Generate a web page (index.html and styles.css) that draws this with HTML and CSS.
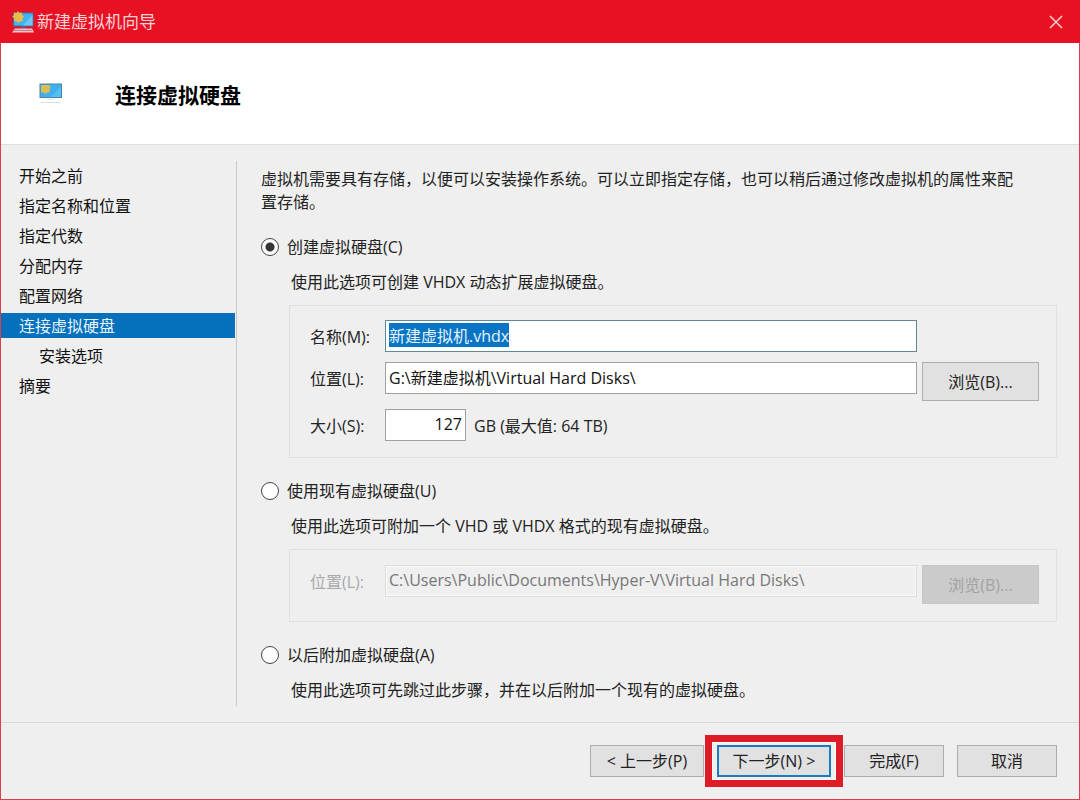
FILE: index.html
```
<!DOCTYPE html>
<html lang="zh-CN">
<head>
    <meta charset="UTF-8">
    <meta name="viewport" content="width=device-width, initial-scale=1.0">
    <title>新建虚拟机向导</title>
    <link rel="stylesheet" href="styles.css">
</head>
<body>
    <form class="window">
        <header class="titlebar">
            <svg class="titlebar-icon" viewBox="0 0 22 22" aria-hidden="true">
                <rect x="1" y="1.5" width="20.5" height="14" fill="#3f6f9c"/>
                <rect x="2" y="2.5" width="18.5" height="12" fill="#45b4ee"/>
                <path d="M11 14.5 20.5 4v10.5z" fill="#6cc8f5"/>
                <path d="M6 0l1.5 2 2.5-.5V4l2 1.5-1.5 2 .5 2.5-2.5.3L6.500 12l-2-1.700L2 10l.5-2.500L0 5.500 2 4V1.500l2.500.5z" fill="#e8bd4a"/>
                <path d="M9 15.5h4v2H9z" fill="#4b6a92"/>
                <path d="M3 17.5h17l2 4H0z" fill="#f3c3cc"/>
                <path d="M2 19.5h18" stroke="#c57b92"/>
            </svg>
            <span class="titlebar-text">新建虚拟机向导</span>
            <button type="button" class="close" aria-label="关闭">
                <svg viewBox="0 0 14 14" aria-hidden="true">
                    <path d="M1 1l12 12M13 1L1 13" stroke="#fbd0d4" stroke-width="1.5" fill="none"/>
                </svg>
            </button>
        </header>

        <div class="banner">
            <svg class="banner-icon" viewBox="0 0 24 22" aria-hidden="true">
                <rect x=".5" y=".5" width="22.5" height="14.5" fill="#4583b3"/>
                <rect x="1.5" y="1.5" width="20.5" height="12.5" fill="#3fb0ee"/>
                <path d="M12 14 22 3v11z" fill="#58bdf2"/>
                <path d="M2 2h8l2 2-1.5 2 .5 3-2.5.5-2 1.5-2-1.5L2 9.5z" fill="#d9bd55"/>
                <path d="M8 16.5h7" stroke="#e3eaf0"/>
                <path d="M2 19.5h19" stroke="#dcdcdc"/>
            </svg>
            <h1>连接虚拟硬盘</h1>
        </div>

        <div class="main">
            <nav class="steps">
                <a href="#">开始之前</a>
                <a href="#">指定名称和位置</a>
                <a href="#">指定代数</a>
                <a href="#">分配内存</a>
                <a href="#">配置网络</a>
                <a href="#" class="active" aria-current="step">连接虚拟硬盘</a>
                <a href="#" class="sub">安装选项</a>
                <a href="#">摘要</a>
            </nav>

            <section class="content">
                <p class="intro">虚拟机需要具有存储，以便可以安装操作系统。可以立即指定存储，也可以稍后通过修改虚拟机的属性来配置存储。</p>

                <label class="option"><input type="radio" name="disk" checked>创建虚拟硬盘(C)</label>
                <p class="hint">使用此选项可创建 VHDX 动态扩展虚拟硬盘。</p>
                <div class="group">
                    <label for="name">名称(M):</label>
                    <input type="text" id="name" class="focus" value="新建虚拟机.vhdx">
                    <label for="path" class="row-start">位置(L):</label>
                    <input type="text" id="path" value="G:\新建虚拟机\Virtual Hard Disks\">
                    <button type="button" class="browse">浏览(B)...</button>
                    <label for="size" class="row-start">大小(S):</label>
                    <div class="size">
                        <input type="text" id="size" value="127">
                        <span>GB (最大值: 64 TB)</span>
                    </div>
                </div>

                <label class="option"><input type="radio" name="disk">使用现有虚拟硬盘(U)</label>
                <p class="hint">使用此选项可附加一个 VHD 或 VHDX 格式的现有虚拟硬盘。</p>
                <div class="group disabled">
                    <label for="existing">位置(L):</label>
                    <input type="text" id="existing" value="C:\Users\Public\Documents\Hyper-V\Virtual Hard Disks\" disabled>
                    <button type="button" class="browse" disabled>浏览(B)...</button>
                </div>

                <label class="option"><input type="radio" name="disk">以后附加虚拟硬盘(A)</label>
                <p class="hint">使用此选项可先跳过此步骤，并在以后附加一个现有的虚拟硬盘。</p>
            </section>
        </div>

        <footer class="actions">
            <button type="button" class="wide">&lt; 上一步(P)</button>
            <button type="button" class="wide next">下一步(N) &gt;</button>
            <button type="button">完成(F)</button>
            <button type="button">取消</button>
        </footer>
    </form>

    <script>
        // 打开时选中文件名
        const nameInput = document.getElementById('name');
        nameInput.focus();
        nameInput.select();
    </script>
</body>
</html>
```
FILE: styles.css
```
* {
    box-sizing: border-box;
}

body {
    margin: 0;
    font-family: "Open Sans", "Noto Sans CJK SC", sans-serif;
    font-size: 16px;
    line-height: 24px;
    color: #222;
}

h1,
p {
    margin: 0;
}

button,
input {
    font: inherit;
    color: inherit;
}

.window {
    display: flex;
    flex-direction: column;
    min-height: 100vh;
    background-color: #efefef;
    border: 1px solid #d8404f;
    border-top: none;
}

/* 标题栏 */
.titlebar {
    display: flex;
    align-items: center;
    height: 43px;
    margin: 0 -1px;
    padding: 0 17px 0 12px;
    background-color: #e81123;
    color: #fbd3d7;
}

.titlebar-icon {
    width: 22px;
    height: 22px;
    margin-right: 3px;
}

.titlebar-text {
    flex: 1;
    font-size: 17px;
}

.close {
    display: flex;
    padding: 0;
    border: none;
    background: none;
}

.close svg {
    width: 14px;
    height: 14px;
}

.banner {
    display: flex;
    align-items: center;
    height: 102px;
    padding-left: 38px;
    background-color: #fff;
    border-bottom: 1px solid #dedede;
}

.banner-icon {
    width: 24px;
    height: 22px;
    margin-right: 52px;
}

h1 {
    padding-top: 2px;
    font-size: 21px;
    line-height: 28px;
    color: #000;
}

.main {
    display: flex;
    flex: 1;
    padding-bottom: 16px;
}

/* 左侧步骤 */
.steps {
    display: flex;
    flex-direction: column;
    gap: 5px;
    width: 234px;
    flex-shrink: 0;
    padding-top: 18px;
}

.steps a {
    padding-top: 2px;
    padding-left: 18px;
    line-height: 23px;
    color: #111;
    text-decoration: none;
}

.steps a.sub {
    padding-left: 38px;
}

.steps a.active {
    background-color: #0570bb;
    color: #e6f3fc;
}

.content {
    flex: 1;
    margin-top: 16px;
    margin-left: 1px;
    padding: 7px 22px 0 24px;
    border-left: 1px solid #c9c9c9;
}

.intro {
    padding-right: 36px;
    line-height: 23px;
}

.option {
    display: flex;
    align-items: center;
    gap: 8px;
    margin-top: 21px;
}

.option input {
    appearance: none;
    width: 18px;
    height: 18px;
    margin: 0;
    border: 1px solid #444;
    border-radius: 50%;
    background-color: #fff;
}

.option input:checked {
    background-image: radial-gradient(circle, #333 4px, transparent 5px);
}

.hint {
    margin-top: 11px;
    padding-left: 30px;
}

.group {
    display: grid;
    grid-template-columns: 70px 1fr 117px;
    column-gap: 5px;
    row-gap: 8px;
    align-items: start;
    margin-top: 11px;
    margin-left: 28px;
    padding: 14px 17px 14px 20px;
    border: 1px solid #e0e0e0;
}

.group > label {
    line-height: 34px;
}

.group input {
    width: 100%;
    height: 32px;
    padding: 0 3px 2px;
    border: 1px solid #a0a0a0;
    background-color: #fff;
    color: #111;
}

.group input.focus {
    border-color: #5f8796;
    outline: none;
}

.group input::selection {
    background-color: #0874c4;
    color: #e6f3fc;
}

.row-start {
    grid-column-start: 1;
}

.size {
    display: flex;
    gap: 8px;
    line-height: 34px;
}

.group .size input {
    width: 81px;
    text-align: right;
}

.group.disabled {
    padding-top: 15px;
    padding-bottom: 17px;
    color: #aaa;
}

.group input:disabled {
    border: 1px solid #dcdcdc;
    background-color: #efefef;
    box-shadow: inset 0 0 0 1px #fafafa;
    color: #777;
}

.browse,
.actions button {
    padding: 0;
    border: 1px solid #adadad;
    background-color: #e1e1e1;
    color: #222;
}

.browse {
    height: 39px;
}

.browse:disabled {
    border-color: #c6c6c6;
    background-color: #cbcbcb;
    color: #a2a2a2;
}

/* 底部按钮 */
.actions {
    display: flex;
    justify-content: flex-end;
    gap: 13px;
    padding: 22px;
    border-top: 1px solid #d8d8d8;
}

.actions button {
    width: 100px;
    height: 32px;
}

.actions button.wide {
    width: 114px;
}

.actions button.next {
    position: relative;
    border: 2px solid #2678b5;
    box-shadow: inset 0 0 0 1px #cfe6f8;
}

/* 突出显示下一步的红框 */
.next::after {
    content: '';
    position: absolute;
    inset: -12px -14px;
    border: 7px solid #dd1c28;
    box-shadow: inset 0 0 0 1px #fff;
}
```
